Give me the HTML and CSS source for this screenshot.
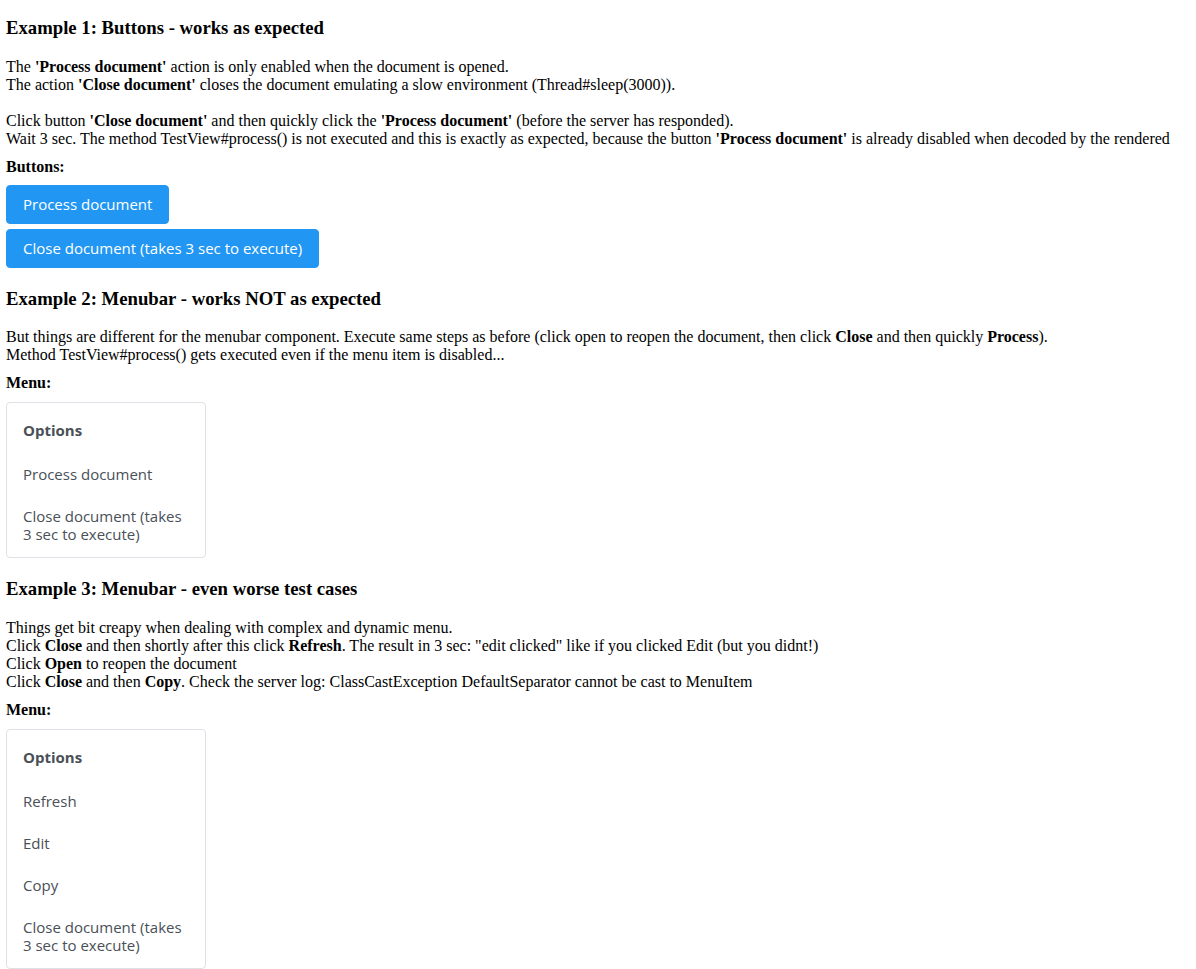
FILE: index.html
```html
<!DOCTYPE html>
<html lang="en">
<head>
<meta charset="utf-8">
<title>Menubar test</title>
<link rel="stylesheet" href="styles.css">
</head>
<body>
<div class="page">
  <section class="example">
    <h3 class="title">Example 1: Buttons - works as expected</h3>
    <p class="desc">The <b>'Process document'</b> action is only enabled when the document is opened.<br>The action <b>'Close document'</b> closes the document emulating a slow environment (Thread#sleep(3000)).<br><br>Click button <b>'Close document'</b> and then quickly click the <b>'Process document'</b> (before the server has responded).<br>Wait 3 sec. The method TestView#process() is not executed and this is exactly as expected, because the button <b>'Process document'</b> is already disabled when decoded by the rendered</p>
    <div class="label">Buttons:</div>
    <div class="buttons">
      <button class="btn" type="button">Process document</button>
      <button class="btn" type="button">Close document (takes 3 sec to execute)</button>
    </div>
  </section>

  <section class="example">
    <h3 class="title">Example 2: Menubar - works NOT as expected</h3>
    <p class="desc">But things are different for the menubar component. Execute same steps as before (click open to reopen the document, then click <b>Close</b> and then quickly <b>Process</b>).<br>Method TestView#process() gets executed even if the menu item is disabled...</p>
    <div class="label">Menu:</div>
    <div class="menu">
      <div class="menu-header">Options</div>
      <div class="menu-item">Process document</div>
      <div class="menu-item">Close document (takes 3 sec to execute)</div>
    </div>
  </section>

  <section class="example">
    <h3 class="title">Example 3: Menubar - even worse test cases</h3>
    <p class="desc">Things get bit creapy when dealing with complex and dynamic menu.<br>Click <b>Close</b> and then shortly after this click <b>Refresh</b>. The result in 3 sec: "edit clicked" like if you clicked Edit (but you didnt!)<br>Click <b>Open</b> to reopen the document<br>Click <b>Close</b> and then <b>Copy</b>. Check the server log: ClassCastException DefaultSeparator cannot be cast to MenuItem</p>
    <div class="label">Menu:</div>
    <div class="menu">
      <div class="menu-header">Options</div>
      <div class="menu-item">Refresh</div>
      <div class="menu-item">Edit</div>
      <div class="menu-item">Copy</div>
      <div class="menu-item">Close document (takes 3 sec to execute)</div>
    </div>
  </section>
</div>
</body>
</html>
```
FILE: styles.css
```css
html, body {
  margin: 0;
  padding: 0;
  background: #ffffff;
}

body {
  font-family: "Liberation Serif", "Times New Roman", serif;
  font-size: 16px;
  color: #000000;
}

.page {
  padding: 0 6px;
}

.title {
  font-size: 18.72px;
  font-weight: bold;
  line-height: 22px;
  margin: 20px 0 18.72px;
}

.example:first-child .title {
  margin-top: 17px;
}

.desc {
  margin: 0;
  line-height: 18px;
}

.label {
  font-weight: bold;
  line-height: 18px;
  margin: 10px 0;
}

.buttons {
  display: flex;
  flex-direction: column;
  align-items: flex-start;
  gap: 5px;
  margin-top: -1px;
}

.btn {
  font-family: "Open Sans", "Noto Sans", sans-serif;
  font-size: 15px;
  line-height: 21px;
  color: #ffffff;
  background: #2196f3;
  border: 1px solid #2196f3;
  border-radius: 4px;
  padding: 8px 16px;
  margin: 0;
  cursor: pointer;
}

.menu {
  width: 200px;
  box-sizing: border-box;
  border: 1px solid #dee2e6;
  border-radius: 4px;
  padding: 4px 0 2px;
  font-family: "Open Sans", "Noto Sans", sans-serif;
  font-size: 15px;
  color: #495057;
  background: #ffffff;
}

.menu-header {
  font-weight: 700;
  line-height: 22px;
  padding: 12px 16px;
}

.menu-item {
  line-height: 18px;
  padding: 12px 16px;
}
```
